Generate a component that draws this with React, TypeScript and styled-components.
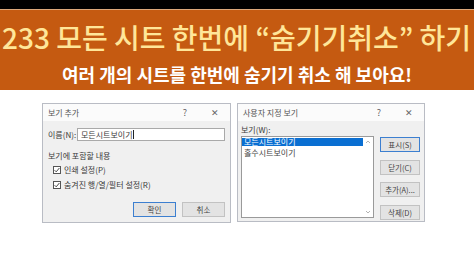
import React, { FC } from "react";
import styled, { createGlobalStyle } from "styled-components";

const GlobalStyle = createGlobalStyle`
  html, body {
    margin: 0;
    padding: 0;
    background: #ffffff;
  }
  body {
    font-family: "Noto Sans CJK KR", "Noto Sans", sans-serif;
  }
`;

const Page = styled.div`
  width: 474px;
  height: 266px;
  overflow: hidden;
  display: flex;
  flex-direction: column;
  background: #ffffff;
`;

const TopBar = styled.div`
  height: 9px;
  background: #000000;
`;

const Banner = styled.div`
  height: 81px;
  box-sizing: border-box;
  border-top: 1px solid #dca77a;
  background: #c55a11;
  display: flex;
  flex-direction: column;
  padding-top: 11px;
`;

const Title = styled.div`
  font-family: "Noto Sans CJK KR", sans-serif;
  font-size: 28px;
  font-weight: 500;
  line-height: 32px;
  color: #ffe699;
  padding-left: 2px;
  white-space: nowrap;
`;

const Subtitle = styled.div`
  margin-top: 9px;
  font-family: "Noto Sans CJK KR", sans-serif;
  font-size: 18px;
  font-weight: 700;
  line-height: 24px;
  color: #ffffff;
  text-align: center;
  white-space: nowrap;
`;

const Stage = styled.div`
  display: flex;
  align-items: flex-start;
  gap: 6px;
  padding: 13px 0 0 42px;
`;

const Dialog = styled.div<{ $w: number; $h: number }>`
  width: ${(p) => p.$w}px;
  height: ${(p) => p.$h}px;
  box-sizing: border-box;
  border: 1px solid #b9bcc4;
  background: #f0f0f0;
  display: flex;
  flex-direction: column;
  font-size: 8px;
  color: #3a3a3a;
`;

const TitleBar = styled.div`
  height: 17px;
  flex: none;
  display: flex;
  align-items: center;
  padding: 0 0 0 5px;
  background: #fbfbfb;
  font-size: 8px;
  color: #555;
`;

const TitleText = styled.span`
  flex: 1;
`;

const TitleIcon = styled.span`
  width: 30px;
  text-align: center;
  font-size: 9px;
  color: #666;
`;

const Body = styled.div<{ $pad?: string }>`
  flex: 1;
  display: flex;
  flex-direction: column;
  padding: ${(p) => p.$pad ?? "0 5px"};
`;

const FieldRow = styled.div`
  display: flex;
  align-items: center;
  margin-top: 7px;
  height: 13px;
`;

const Label = styled.span`
  width: 29px;
  white-space: nowrap;
`;

const Input = styled.div`
  flex: 1;
  height: 13px;
  box-sizing: border-box;
  border: 1px solid #a9a9a9;
  background: #ffffff;
  display: flex;
  align-items: center;
  padding-left: 3px;
`;

const Caret = styled.span`
  width: 1px;
  height: 9px;
  background: #222;
`;

const SectionLabel = styled.div`
  margin-top: 9px;
  line-height: 12px;
`;

const CheckRow = styled.div<{ $first?: boolean }>`
  display: flex;
  align-items: center;
  gap: 3px;
  margin: ${(p) => (p.$first ? 1 : 2)}px 0 0 5px;
  height: 13px;
`;

const Buttons = styled.div`
  margin-top: auto;
  margin-bottom: 5px;
  display: flex;
  justify-content: flex-end;
  gap: 6px;
`;

const Button = styled.div<{ $primary?: boolean; $w?: number }>`
  width: ${(p) => p.$w ?? 43}px;
  height: 15px;
  box-sizing: border-box;
  border: 1px solid ${(p) => (p.$primary ? "#3c7fd0" : "#c2c2c2")};
  background: #e3e3e3;
  display: flex;
  align-items: center;
  justify-content: center;
  font-size: 7.5px;
  color: #444;
  white-space: nowrap;
`;

const ListLabel = styled.div`
  margin-top: 3px;
  line-height: 11px;
`;

const ListArea = styled.div`
  display: flex;
  gap: 6px;
  margin-top: 1px;
`;

const ListBox = styled.div`
  width: 135px;
  height: 82px;
  box-sizing: border-box;
  border: 1px solid #9a9a9a;
  background: #ffffff;
  display: flex;
`;

const Items = styled.div`
  flex: 1;
  padding-top: 1px;
`;

const Item = styled.div<{ $selected?: boolean }>`
  height: 8px;
  line-height: 8px;
  padding-left: 2px;
  margin-bottom: 3px;
  background: ${(p) => (p.$selected ? "#0a6fd2" : "transparent")};
  color: ${(p) => (p.$selected ? "#ffffff" : "#444")};
`;

const ScrollBar = styled.div`
  width: 10px;
  display: flex;
  flex-direction: column;
  justify-content: space-between;
  align-items: center;
  padding: 3px 0;
  box-sizing: border-box;
`;

const SideButtons = styled.div`
  display: flex;
  flex-direction: column;
  gap: 7.5px;
  margin-top: 1px;
`;

const CheckIcon: FC = () => (
  <svg width="8" height="8" viewBox="0 0 8 8">
    <rect x="0.5" y="0.5" width="7" height="7" fill="#fff" stroke="#555" />
    <path d="M1.6 4.2 L3.2 5.8 L6.4 2" fill="none" stroke="#333" strokeWidth="0.9" />
  </svg>
);

const Chevron: FC<{ down?: boolean }> = ({ down }) => (
  <svg width="6" height="4" viewBox="0 0 6 4">
    <path d={down ? "M1 1 L3 3 L5 1" : "M1 3 L3 1 L5 3"} fill="none" stroke="#a0a0a0" strokeWidth="0.8" />
  </svg>
);

const App: FC = () => (
  <Page>
    <GlobalStyle />
    <TopBar />
    <Banner>
      <Title>233 모든 시트 한번에 “숨기기취소” 하기</Title>
      <Subtitle>여러 개의 시트를 한번에 숨기기 취소 해 보아요!</Subtitle>
    </Banner>
    <Stage>
      <Dialog $w={189} $h={120}>
        <TitleBar>
          <TitleText>보기 추가</TitleText>
          <TitleIcon>?</TitleIcon>
          <TitleIcon>✕</TitleIcon>
        </TitleBar>
        <Body>
          <FieldRow>
            <Label>이름(N):</Label>
            <Input>
              모든시트보이기
              <Caret />
            </Input>
          </FieldRow>
          <SectionLabel>보기에 포함할 내용</SectionLabel>
          <CheckRow $first>
            <CheckIcon />
            인쇄 설정(P)
          </CheckRow>
          <CheckRow>
            <CheckIcon />
            숨겨진 행/열/필터 설정(R)
          </CheckRow>
          <Buttons>
            <Button $primary>확인</Button>
            <Button>취소</Button>
          </Buttons>
        </Body>
      </Dialog>
      <Dialog $w={188} $h={119}>
        <TitleBar>
          <TitleText>사용자 지정 보기</TitleText>
          <TitleIcon>?</TitleIcon>
          <TitleIcon>✕</TitleIcon>
        </TitleBar>
        <Body $pad="0 4px 0 3px">
          <ListLabel>보기(W):</ListLabel>
          <ListArea>
            <ListBox>
              <Items>
                <Item $selected>모든시트보이기</Item>
                <Item>홀수시트보이기</Item>
              </Items>
              <ScrollBar>
                <Chevron />
                <Chevron down />
              </ScrollBar>
            </ListBox>
            <SideButtons>
              <Button $primary $w={40}>표시(S)</Button>
              <Button $w={40}>닫기(C)</Button>
              <Button $w={40}>추가(A)...</Button>
              <Button $w={40}>삭제(D)</Button>
            </SideButtons>
          </ListArea>
        </Body>
      </Dialog>
    </Stage>
  </Page>
);

export default App;
